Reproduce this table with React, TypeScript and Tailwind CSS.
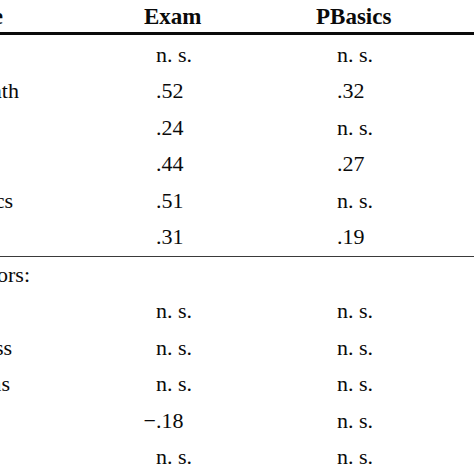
const serif = { fontFamily: '"Liberation Serif", "Times New Roman", serif' };

type Row = { label?: string; end?: string; exam?: string; pbasics?: string };

const upper: Row[] = [
  { exam: 'n. s.', pbasics: 'n. s.' },
  { label: 'Math', end: 'w-[19px]', exam: '.52', pbasics: '.32' },
  { exam: '.24', pbasics: 'n. s.' },
  { exam: '.44', pbasics: '.27' },
  { label: 'Physics', end: 'w-[13px]', exam: '.51', pbasics: 'n. s.' },
  { exam: '.31', pbasics: '.19' },
];

const lower: Row[] = [
  { label: 'Predictors:', end: 'w-[30px]' },
  { exam: 'n. s.', pbasics: 'n. s.' },
  { label: 'Stress', end: 'w-[12px]', exam: 'n. s.', pbasics: 'n. s.' },
  { label: 'Problems', end: 'w-[10px]', exam: 'n. s.', pbasics: 'n. s.' },
  { exam: '\u2212.18', pbasics: 'n. s.' },
  { exam: 'n. s.', pbasics: 'n. s.' },
];

function Value({ text }: { text?: string }) {
  if (!text) return <div />;
  if (text.startsWith('\u2212')) {
    return (
      <div className="whitespace-nowrap">
        <span className="-ml-[12.4px]">{'\u2212'}</span>
        {text.slice(1)}
      </div>
    );
  }
  return <div className="whitespace-nowrap">{text}</div>;
}

function TableRow({ row }: { row: Row }) {
  return (
    <div className="grid grid-cols-[156px_181px_1fr] h-[36.5px] leading-[36.5px]">
      <div>
        {row.label && (
          <div className={`flex justify-end whitespace-nowrap ${row.end}`}>
            <span>{row.label}</span>
          </div>
        )}
      </div>
      <Value text={row.exam} />
      <Value text={row.pbasics} />
    </div>
  );
}

export default function App() {
  return (
    <div className="w-[474px] h-[474px] overflow-hidden bg-white text-[#0a0a0a]" style={serif}>
      <div className="grid grid-cols-[144px_172px_1fr] h-[35px] pt-[2px] leading-[30px] text-[23px] font-bold border-b-[3px] border-[#0a0a0a]">
        <div className="flex justify-end w-[3px] whitespace-nowrap">
          <span>Variable</span>
        </div>
        <div>Exam</div>
        <div>PBasics</div>
      </div>
      <div className="pt-[1.5px] text-[22px]">
        {upper.map((row, i) => (
          <TableRow key={i} row={row} />
        ))}
      </div>
      <div className="border-t-[1.5px] border-[#3a3a3a] text-[22px]">
        {lower.map((row, i) => (
          <TableRow key={i} row={row} />
        ))}
      </div>
    </div>
  );
}
